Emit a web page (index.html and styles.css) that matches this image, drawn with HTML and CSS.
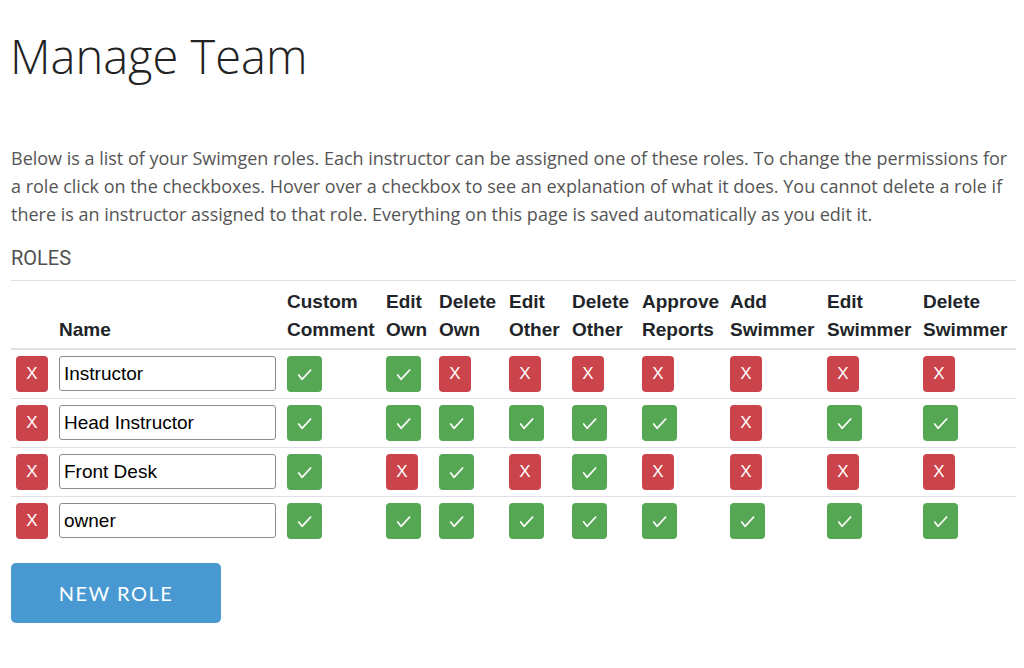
FILE: index.html
```html
<!DOCTYPE html>
<html lang="en">
<head>
<meta charset="utf-8">
<title>Manage Team</title>
<link rel="stylesheet" href="styles.css">
</head>
<body>
<div class="page">
  <h1 class="title">Manage Team</h1>
  <p class="intro">Below is a list of your Swimgen roles. Each instructor can be assigned one of these roles. To change the permissions for a role click on the checkboxes. Hover over a checkbox to see an explanation of what it does. You cannot delete a role if there is an instructor assigned to that role. Everything on this page is saved automatically as you edit it.</p>
  <div class="section-label">ROLES</div>
  <table class="roles">
    <colgroup>
      <col class="c-del"><col class="c-name"><col class="c-cc"><col class="c-eo"><col class="c-do"><col class="c-eot"><col class="c-dot"><col class="c-ar"><col class="c-as"><col class="c-es"><col class="c-ds">
    </colgroup>
    <thead>
      <tr>
        <th></th><th>Name</th><th>Custom Comment</th><th>Edit Own</th><th>Delete Own</th><th>Edit Other</th><th>Delete Other</th><th>Approve Reports</th><th>Add Swimmer</th><th>Edit Swimmer</th><th>Delete Swimmer</th>
      </tr>
    </thead>
    <tbody>
      <tr>
        <td><button class="btn no">X</button></td>
        <td><input class="name-input" type="text" value="Instructor"></td>
        <td><button class="btn yes"><svg viewBox="0 0 35 36" class="chk"><polyline points="11.7,19 15,23.3 23.7,14"/></svg></button></td>
        <td><button class="btn yes"><svg viewBox="0 0 35 36" class="chk"><polyline points="11.7,19 15,23.3 23.7,14"/></svg></button></td>
        <td><button class="btn no">X</button></td>
        <td><button class="btn no">X</button></td>
        <td><button class="btn no">X</button></td>
        <td><button class="btn no">X</button></td>
        <td><button class="btn no">X</button></td>
        <td><button class="btn no">X</button></td>
        <td><button class="btn no">X</button></td>
      </tr>
      <tr>
        <td><button class="btn no">X</button></td>
        <td><input class="name-input" type="text" value="Head Instructor"></td>
        <td><button class="btn yes"><svg viewBox="0 0 35 36" class="chk"><polyline points="11.7,19 15,23.3 23.7,14"/></svg></button></td>
        <td><button class="btn yes"><svg viewBox="0 0 35 36" class="chk"><polyline points="11.7,19 15,23.3 23.7,14"/></svg></button></td>
        <td><button class="btn yes"><svg viewBox="0 0 35 36" class="chk"><polyline points="11.7,19 15,23.3 23.7,14"/></svg></button></td>
        <td><button class="btn yes"><svg viewBox="0 0 35 36" class="chk"><polyline points="11.7,19 15,23.3 23.7,14"/></svg></button></td>
        <td><button class="btn yes"><svg viewBox="0 0 35 36" class="chk"><polyline points="11.7,19 15,23.3 23.7,14"/></svg></button></td>
        <td><button class="btn yes"><svg viewBox="0 0 35 36" class="chk"><polyline points="11.7,19 15,23.3 23.7,14"/></svg></button></td>
        <td><button class="btn no">X</button></td>
        <td><button class="btn yes"><svg viewBox="0 0 35 36" class="chk"><polyline points="11.7,19 15,23.3 23.7,14"/></svg></button></td>
        <td><button class="btn yes"><svg viewBox="0 0 35 36" class="chk"><polyline points="11.7,19 15,23.3 23.7,14"/></svg></button></td>
      </tr>
      <tr>
        <td><button class="btn no">X</button></td>
        <td><input class="name-input" type="text" value="Front Desk"></td>
        <td><button class="btn yes"><svg viewBox="0 0 35 36" class="chk"><polyline points="11.7,19 15,23.3 23.7,14"/></svg></button></td>
        <td><button class="btn no">X</button></td>
        <td><button class="btn yes"><svg viewBox="0 0 35 36" class="chk"><polyline points="11.7,19 15,23.3 23.7,14"/></svg></button></td>
        <td><button class="btn no">X</button></td>
        <td><button class="btn yes"><svg viewBox="0 0 35 36" class="chk"><polyline points="11.7,19 15,23.3 23.7,14"/></svg></button></td>
        <td><button class="btn no">X</button></td>
        <td><button class="btn no">X</button></td>
        <td><button class="btn no">X</button></td>
        <td><button class="btn no">X</button></td>
      </tr>
      <tr>
        <td><button class="btn no">X</button></td>
        <td><input class="name-input" type="text" value="owner"></td>
        <td><button class="btn yes"><svg viewBox="0 0 35 36" class="chk"><polyline points="11.7,19 15,23.3 23.7,14"/></svg></button></td>
        <td><button class="btn yes"><svg viewBox="0 0 35 36" class="chk"><polyline points="11.7,19 15,23.3 23.7,14"/></svg></button></td>
        <td><button class="btn yes"><svg viewBox="0 0 35 36" class="chk"><polyline points="11.7,19 15,23.3 23.7,14"/></svg></button></td>
        <td><button class="btn yes"><svg viewBox="0 0 35 36" class="chk"><polyline points="11.7,19 15,23.3 23.7,14"/></svg></button></td>
        <td><button class="btn yes"><svg viewBox="0 0 35 36" class="chk"><polyline points="11.7,19 15,23.3 23.7,14"/></svg></button></td>
        <td><button class="btn yes"><svg viewBox="0 0 35 36" class="chk"><polyline points="11.7,19 15,23.3 23.7,14"/></svg></button></td>
        <td><button class="btn yes"><svg viewBox="0 0 35 36" class="chk"><polyline points="11.7,19 15,23.3 23.7,14"/></svg></button></td>
        <td><button class="btn yes"><svg viewBox="0 0 35 36" class="chk"><polyline points="11.7,19 15,23.3 23.7,14"/></svg></button></td>
        <td><button class="btn yes"><svg viewBox="0 0 35 36" class="chk"><polyline points="11.7,19 15,23.3 23.7,14"/></svg></button></td>
      </tr>
    </tbody>
  </table>
  <button class="new-role">NEW ROLE</button>
</div>
</body>
</html>
```

FILE: styles.css
```css
html, body {
  margin: 0;
  padding: 0;
  background: #ffffff;
}

.page {
  width: 1005px;
  padding-left: 11px;
  font-family: "Open Sans", "Liberation Sans", sans-serif;
}

.title {
  margin: 28px 0 58px -1px;
  font-family: "Open Sans", sans-serif;
  font-weight: 300;
  font-size: 47px;
  line-height: 57.6px;
  color: #222222;
}

.intro {
  margin: 0;
  font-size: 18px;
  line-height: 28px;
  color: #555555;
}

.section-label {
  margin: 17px 0 8.4px;
  font-family: Roboto, "Liberation Sans", sans-serif;
  font-size: 20px;
  line-height: 27px;
  color: #505050;
}

.roles {
  width: 1005px;
  table-layout: fixed;
  border-collapse: collapse;
  margin-bottom: 18px;
  font-family: "Liberation Sans", Arial, sans-serif;
  color: #212529;
}

.c-del { width: 43px; }
.c-name { width: 228px; }
.c-cc { width: 99px; }
.c-eo { width: 53px; }
.c-do { width: 70px; }
.c-eot { width: 63px; }
.c-dot { width: 70px; }
.c-ar { width: 88px; }
.c-as { width: 97px; }
.c-es { width: 96px; }
.c-ds { width: 98px; }

.roles th {
  padding: 7px 5px 3px;
  border-top: 1px solid #dee2e6;
  border-bottom: 2px solid #dee2e6;
  font-size: 19px;
  font-weight: bold;
  line-height: 28.5px;
  text-align: left;
  vertical-align: bottom;
}

.roles td {
  padding: 6px 5px;
  border-top: 1px solid #dee2e6;
  vertical-align: middle;
  line-height: 0;
}

.btn {
  display: flex;
  align-items: center;
  justify-content: center;
  height: 36px;
  padding: 0;
  border: none;
  border-radius: 4px;
  color: #ffffff;
  font-family: "Liberation Sans", Arial, sans-serif;
  font-size: 17px;
  line-height: 1;
}

.btn.no {
  width: 32px;
  background: #cc444b;
}

.btn.yes {
  width: 35px;
  background: #55a754;
}

.chk {
  width: 35px;
  height: 36px;
  display: block;
}

.chk polyline {
  fill: none;
  stroke: #ffffff;
  stroke-width: 1.7;
  stroke-linecap: round;
  stroke-linejoin: round;
}

.name-input {
  display: block;
  box-sizing: border-box;
  width: 217px;
  height: 35px;
  margin: 0;
  padding: 0 4px;
  border: 1px solid #8c8c8c;
  border-radius: 3px;
  font-family: "Liberation Sans", Arial, sans-serif;
  font-size: 19px;
  color: #000000;
  background: #ffffff;
}

.new-role {
  display: block;
  width: 210px;
  height: 60px;
  border: none;
  border-radius: 5px;
  background: #4899d2;
  color: #ffffff;
  font-family: Lato, "Open Sans", sans-serif;
  font-size: 20px;
  letter-spacing: 1.5px;
  padding: 0;
}
```
